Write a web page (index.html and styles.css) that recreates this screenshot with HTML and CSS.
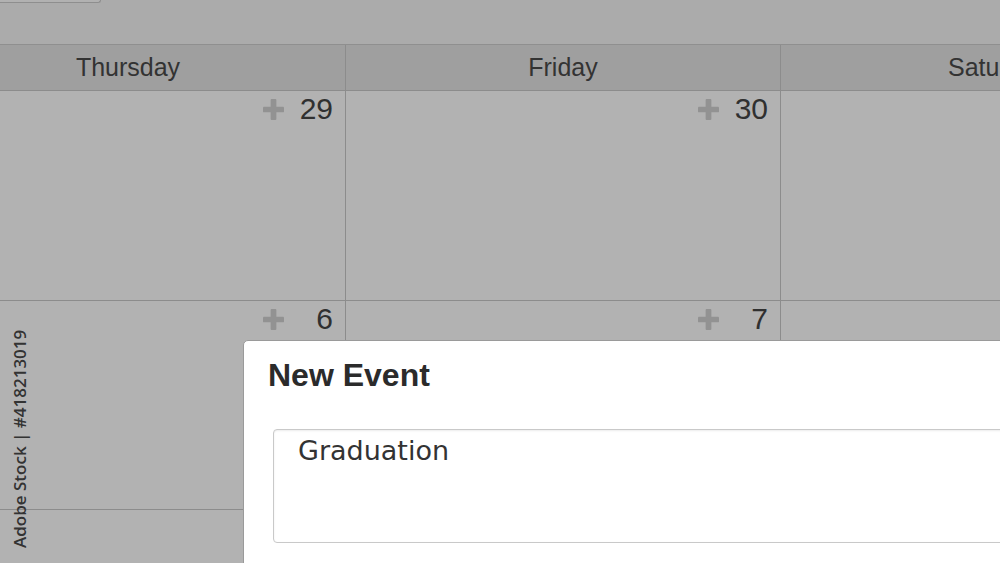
FILE: index.html
```html
<!DOCTYPE html>
<html>
<head>
<meta charset="utf-8">
<link rel="stylesheet" href="styles.css">
</head>
<body>
<div class="page">
  <div class="toolbar"><div class="btn"></div></div>
  <div class="calendar">
    <div class="head">Thursday</div>
    <div class="head">Friday</div>
    <div class="head">Saturday</div>

    <div class="cell"><div class="date"><svg class="plus" viewBox="0 0 22 22"><rect x="8" y="0" width="6" height="22" rx="1"/><rect x="0" y="8" width="22" height="6" rx="1"/></svg><span class="num">29</span></div></div>
    <div class="cell"><div class="date"><svg class="plus" viewBox="0 0 22 22"><rect x="8" y="0" width="6" height="22" rx="1"/><rect x="0" y="8" width="22" height="6" rx="1"/></svg><span class="num">30</span></div></div>
    <div class="cell"><div class="date"></div></div>

    <div class="cell"><div class="date"><svg class="plus" viewBox="0 0 22 22"><rect x="8" y="0" width="6" height="22" rx="1"/><rect x="0" y="8" width="22" height="6" rx="1"/></svg><span class="num">6</span></div></div>
    <div class="cell"><div class="date"><svg class="plus" viewBox="0 0 22 22"><rect x="8" y="0" width="6" height="22" rx="1"/><rect x="0" y="8" width="22" height="6" rx="1"/></svg><span class="num">7</span></div></div>
    <div class="cell"><div class="date"></div></div>

    <div class="cell"></div>
    <div class="cell"></div>
    <div class="cell"></div>
  </div>

  <div class="modal">
    <h2 class="modal-title">New Event</h2>
    <div class="field">Graduation</div>
  </div>

  <div class="stock-id">Adobe Stock | #418213019</div>
</div>
</body>
</html>
```

FILE: styles.css
```css
html, body {
  margin: 0;
  padding: 0;
  width: 1000px;
  height: 563px;
  overflow: hidden;
  background: #ababab;
  font-family: "Liberation Sans", Arial, sans-serif;
}

.page {
  position: relative;
  width: 1000px;
  height: 563px;
  overflow: hidden;
}

.toolbar {
  display: flex;
  align-items: flex-start;
  height: 44px;
  background: #ababab;
}

.btn {
  width: 100px;
  height: 30px;
  margin-top: -28px;
  border: 1px solid #8e8e8e;
  border-top: none;
  border-left: none;
  border-radius: 0 0 3px 0;
  background: #b1b1b1;
}

.calendar {
  display: grid;
  grid-template-columns: 435px 435px 435px;
  grid-template-rows: 46px 210px 209px 209px;
  margin-left: -89px;
  width: 1306px;
  border-top: 1px solid #8f8f8f;
}

.head {
  background: #9f9f9f;
  border-right: 1px solid #8c8c8c;
  border-bottom: 1px solid #8c8c8c;
  color: #333;
  font-size: 25px;
  text-align: center;
  line-height: 44px;
}

.cell {
  background: #b2b2b2;
  border-right: 1px solid #8c8c8c;
  border-bottom: 1px solid #8c8c8c;
}

.date {
  display: flex;
  justify-content: flex-end;
  align-items: center;
  gap: 14px;
  padding-right: 12px;
  height: 36px;
  font-size: 30px;
  color: #303030;
}

.num {
  min-width: 35px;
  text-align: right;
}

.plus {
  width: 21px;
  height: 21px;
  fill: #929292;
}

.modal {
  position: absolute;
  left: 243px;
  top: 340px;
  width: 820px;
  height: 300px;
  background: #fff;
  border: 1px solid #9a9a9a;
  border-radius: 5px;
  box-sizing: border-box;
  padding: 17px 0 0 24px;
}

.modal-title {
  margin: 0;
  font-size: 32px;
  line-height: 34px;
  font-weight: bold;
  color: #2b2b2b;
}

.field {
  margin: 37px 0 0 5px;
  height: 114px;
  border: 1px solid #c9c9c9;
  border-radius: 4px;
  box-shadow: inset 0 1px 2px rgba(0,0,0,0.08);
  padding: 3px 24px;
  box-sizing: border-box;
  font-family: "DejaVu Sans", "Open Sans", sans-serif;
  font-size: 27px;
  line-height: 36px;
  color: #333;
}

.stock-id {
  position: absolute;
  left: 9px;
  top: 548px;
  transform: rotate(-90deg);
  transform-origin: 0 0;
  white-space: nowrap;
  font-family: "Open Sans", "DejaVu Sans", sans-serif;
  font-size: 17px;
  font-weight: 600;
  line-height: 22px;
  color: #333;
}
```
